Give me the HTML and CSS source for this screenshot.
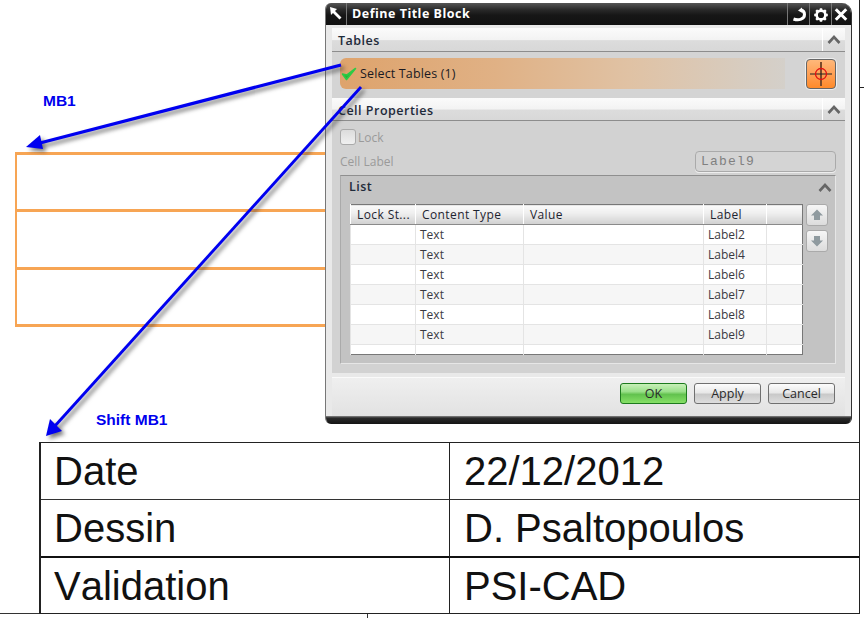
FILE: index.html
```html
<!DOCTYPE html>
<html lang="en">
<head>
<meta charset="utf-8">
<title>Define Title Block</title>
<link rel="stylesheet" href="styles.css">
</head>
<body>
<main class="canvas">
  <div class="frame-top-right"></div>
  <div class="frame-right"></div>
  <div class="frame-bottom"></div>
  <div class="frame-tick"></div>

  <div class="selected-table">
    <div class="selected-row"></div>
    <div class="selected-row"></div>
    <div class="selected-row"></div>
  </div>

  <div class="title-block">
    <div class="tb-cell">Date</div><div class="tb-cell">22/12/2012</div>
    <div class="tb-cell">Dessin</div><div class="tb-cell">D. Psaltopoulos</div>
    <div class="tb-cell">Validation</div><div class="tb-cell">PSI-CAD</div>
  </div>

  <section class="dialog">
    <header class="titlebar">
      <span class="tb-btn tb-pin">
        <svg width="20" height="20" viewBox="0 0 20 20"><path d="M4 3 L11 5 L9 7 L15.500 13.500 L13.500 15.500 L7 9 L5 11 Z" fill="#fff"/></svg>
      </span>
      <span class="dialog-title">Define Title Block</span>
      <span class="tb-btn">
        <svg width="20" height="20" viewBox="0 0 20 20"><path d="M4.500 15 C10 17 15.500 15 15.500 10.500 C15.500 8 14 6.500 12 6" fill="none" stroke="#fff" stroke-width="3"/><path d="M9 6.500 L13 3.500 L13.500 9 Z" fill="#fff"/></svg>
      </span>
      <span class="tb-btn">
        <svg width="20" height="20" viewBox="0 0 20 20"><circle cx="10" cy="11" r="4.400" fill="none" stroke="#fff" stroke-width="2.600"/><g stroke="#fff" stroke-width="2.400"><path d="M10 4.200V6.500M10 15.500V17.800M3.200 11H5.500M14.500 11H16.800M5.200 6.200L6.800 7.800M13.200 14.200L14.800 15.800M14.800 6.200L13.200 7.800M6.800 14.200L5.200 15.800"/></g></svg>
      </span>
      <span class="tb-btn tb-close">
        <svg width="20" height="20" viewBox="0 0 20 20"><path d="M4 5 L15 16 M15 5 L4 16" stroke="#fff" stroke-width="3.200"/></svg>
      </span>
    </header>

    <div class="dialog-body">
      <div class="sec-head">
        <span class="sec-title">Tables</span>
        <span class="chev-cell"><svg class="chev" width="14" height="9" viewBox="0 0 14 9"><path d="M1.500 8 L7 2 L12.500 8" fill="none" stroke="#666" stroke-width="2.600"/></svg></span>
      </div>
      <div class="tables-panel">
        <div class="select-band">
          <svg width="16" height="15" viewBox="0 0 16 15"><path d="M1.500 8 L5.500 13.500 L14.500 2.500 L6 9 Z" fill="#27b53a" stroke="#2ccb45" stroke-width="1.600" stroke-linejoin="round"/></svg>
          <span>Select Tables (1)</span>
        </div>
        <button class="target-btn" type="button" aria-label="Select">
          <svg width="26" height="26" viewBox="0 0 26 26"><path d="M13 1V25" stroke="#7a4a2a" stroke-width="2"/><path d="M2 13H24" stroke="#222" stroke-width="1"/><circle cx="13" cy="13" r="5.500" fill="none" stroke="#e01010" stroke-width="1.300"/></svg>
        </button>
      </div>

      <div class="sec-head sec-head-2">
        <span class="sec-title">Cell Properties</span>
        <span class="chev-cell"><svg class="chev" width="14" height="9" viewBox="0 0 14 9"><path d="M1.500 8 L7 2 L12.500 8" fill="none" stroke="#666" stroke-width="2.600"/></svg></span>
      </div>
      <div class="props-panel">
        <div class="lock-row"><span class="checkbox"></span><span>Lock</span></div>
        <div class="label-row"><span>Cell Label</span><span class="label-input">Label9</span></div>

        <div class="list-box">
          <div class="list-head">
            <span class="list-title">List</span>
            <svg class="chev" width="14" height="9" viewBox="0 0 14 9"><path d="M1.500 8 L7 2 L12.500 8" fill="none" stroke="#666" stroke-width="2.600"/></svg>
          </div>
          <div class="list-main">
            <table class="grid">
              <colgroup><col class="c1"><col class="c2"><col class="c3"><col class="c4"><col class="c5"></colgroup>
              <thead>
                <tr><th>Lock St...</th><th>Content Type</th><th>Value</th><th>Label</th><th></th></tr>
              </thead>
              <tbody>
                <tr><td></td><td>Text</td><td></td><td>Label2</td><td></td></tr>
                <tr><td></td><td>Text</td><td></td><td>Label4</td><td></td></tr>
                <tr><td></td><td>Text</td><td></td><td>Label6</td><td></td></tr>
                <tr><td></td><td>Text</td><td></td><td>Label7</td><td></td></tr>
                <tr><td></td><td>Text</td><td></td><td>Label8</td><td></td></tr>
                <tr><td></td><td>Text</td><td></td><td>Label9</td><td></td></tr>
                <tr class="blank"><td></td><td></td><td></td><td></td><td></td></tr>
              </tbody>
            </table>
            <div class="move-btns">
              <span class="move-btn"><svg width="14" height="14" viewBox="0 0 14 14"><path d="M7 1.500 L13 7.500 H10 V12 H4 V7.500 H1 Z" fill="#8f9a9f"/></svg></span>
              <span class="move-btn"><svg width="14" height="14" viewBox="0 0 14 14"><path d="M7 12.500 L13 6.500 H10 V2 H4 V6.500 H1 Z" fill="#8f9a9f"/></svg></span>
            </div>
          </div>
        </div>
      </div>

      <footer class="dialog-foot">
        <button class="btn btn-ok" type="button">OK</button>
        <button class="btn" type="button">Apply</button>
        <button class="btn" type="button">Cancel</button>
      </footer>
    </div>
    <div class="bottom-bar"></div>
  </section>

  <svg class="arrows" width="864" height="618" viewBox="0 0 864 618">
    <g class="arrow-set">
      <path d="M341 65 L38 143.500" stroke="#0000f0" stroke-width="3.300" fill="none"/>
      <path d="M26 147 L40 135 L43 149 Z" fill="#0000f0"/>
      <path d="M361 87 L54 427" stroke="#0000f0" stroke-width="2.900" fill="none"/>
      <path d="M46 436 L50 419 L62 431 Z" fill="#0000f0"/>
    </g>
  </svg>
  <span class="note note-mb1">MB1</span>
  <span class="note note-shift">Shift MB1</span>
</main>
</body>
</html>
```
FILE: styles.css
```css
* { box-sizing: border-box; }
html, body { margin: 0; padding: 0; background: #fff; }
.canvas {
  position: relative;
  width: 864px;
  height: 618px;
  overflow: hidden;
  background: #fff;
  font-family: "Open Sans", "DejaVu Sans", sans-serif;
}

/* drawing frame lines */
.frame-right { position: absolute; left: 859px; top: 0; width: 1px; height: 614px; background: #222; }
.frame-top-right { position: absolute; left: 859px; top: 87px; width: 5px; height: 1px; background: #222; }
.frame-bottom { position: absolute; left: 0; top: 613px; width: 860px; height: 1px; background: #333; }
.frame-tick { position: absolute; left: 367px; top: 614px; width: 1px; height: 4px; background: #333; }

/* highlighted table behind the dialog */
.selected-table {
  position: absolute;
  left: 15px;
  top: 152px;
  width: 311px;
  height: 175px;
  display: flex;
  flex-direction: column;
  border-left: 2px solid #f7a554;
}
.selected-row { flex: 1; border-top: 3px solid #f7a554; }
.selected-row:last-child { border-bottom: 3px solid #f7a554; }

/* title block */
.title-block {
  position: absolute;
  left: 39px;
  top: 442px;
  width: 821px;
  height: 172px;
  display: grid;
  grid-template-columns: 408px 1fr;
  grid-template-rows: 57px 58px 1fr;
  border: 1px solid #222;
  border-left-width: 2px;
  font-family: "Liberation Sans", Arial, sans-serif;
  font-size: 40px;
  font-kerning: none;
  color: #111;
}
.tb-cell {
  display: flex;
  align-items: center;
  padding: 1px 0 0 14px;
  border-bottom: 1px solid #333;
  white-space: nowrap;
}
.tb-cell:nth-child(odd) { padding-left: 13px; }
.tb-cell:nth-child(even) { border-left: 1px solid #222; }
.tb-cell:nth-child(n+3) { border-bottom: 2px solid #111; }
.tb-cell:nth-child(n+5) { border-bottom: 0; }

/* dialog */
.dialog {
  position: absolute;
  left: 325px;
  top: 3px;
  width: 527px;
  height: 421px;
  display: flex;
  flex-direction: column;
  border-radius: 6px 10px 6px 6px;
  overflow: hidden;
  background: #e9e9e9;
  border-left: 1px solid #777;
  border-right: 1px solid #333;
}
.titlebar {
  flex: none;
  height: 22px;
  display: flex;
  align-items: center;
  background: linear-gradient(#555 0, #2a2a2a 30%, #161616 55%, #111 100%);
  color: #fff;
}
.tb-btn {
  flex: none;
  width: 22px;
  height: 22px;
  display: flex;
  align-items: center;
  justify-content: center;
  border-left: 1px solid #777;
}
.tb-pin { border-left: 0; border-right: 1px solid #777; width: 21px; }
.tb-close { width: 20px; }
.dialog-title {
  flex: 1;
  padding-left: 5px;
  font-size: 12.500px;
  font-weight: 700;
  letter-spacing: 0.500px;
  line-height: 22px;
}
.dialog-body { flex: 1; display: flex; flex-direction: column; padding: 3px 6px 0 6px; min-height: 0; }
.sec-head {
  flex: none;
  height: 24px;
  display: flex;
  align-items: center;
  justify-content: space-between;
  background: linear-gradient(#fbfbfb 0, #f3f3f3 50%, #dcdcdc 55%, #d8d8d8 100%);
  border-bottom: 1px solid #8d8d8d;
  color: #1e2a3a;
}
.sec-head-2 { height: 23px; }
.sec-title { padding: 2px 0 0 6px; font-size: 12.500px; font-weight: 600; letter-spacing: 0.500px; }
.chev-cell {
  width: 23px;
  height: 100%;
  display: flex;
  align-items: center;
  justify-content: center;
  border-left: 1px solid #fff;
}
.tables-panel {
  flex: none;
  height: 46px;
  display: flex;
  align-items: flex-start;
  justify-content: space-between;
  gap: 21px;
  padding: 6px 9px 0 8px;
  background: #d4d4d4;
}
.select-band {
  flex: 1;
  height: 31px;
  display: flex;
  align-items: center;
  gap: 3px;
  padding-left: 1px;
  border-radius: 6px 0 0 6px;
  background: linear-gradient(90deg, #dea36c 0, #e0b185 35%, #e0c2a4 65%, #d4d0ca 100%);
  font-size: 12.500px;
  letter-spacing: 0.150px;
  color: #1a1a22;
  white-space: nowrap;
}
.target-btn {
  flex: none;
  width: 30px;
  height: 30px;
  padding: 1px;
  margin-top: 1px;
  display: flex;
  border: 1px solid #666;
  border-radius: 4px;
  background: linear-gradient(#ffb87a 0, #ffa055 50%, #ff8a2a 100%);
  box-shadow: 0 0 0 1px #eee;
}
.props-panel {
  flex: none;
  height: 252px;
  padding: 8px 9px 0 8px;
  background: #d2d2d2;
  color: #9a9a9a;
  font-size: 12px;
}
.lock-row { height: 16px; display: flex; align-items: center; gap: 2px; }
.checkbox {
  width: 16px;
  height: 16px;
  border: 1px solid #aaa;
  border-radius: 3px;
  background: linear-gradient(#dcdcdc, #f0f0f0);
}
.label-row {
  height: 21px;
  margin-top: 6px;
  display: flex;
  align-items: center;
  justify-content: space-between;
}
.label-input {
  width: 141px;
  height: 21px;
  padding-left: 5px;
  line-height: 19px;
  border: 1px solid #aaa;
  border-radius: 4px;
  background: #d4d4d4;
  box-shadow: 0 1px 0 #eee;
  font-family: "Liberation Mono", monospace;
  font-size: 13px;
  letter-spacing: 1.200px;
  color: #808080;
}
.list-box {
  height: 189px;
  margin-top: 3px;
  background: #c3c3c3;
  border-top: 1px solid #8f8f8f;
  border-left: 1px solid #aaa;
  border-right: 1px solid #e6e6e6;
  border-bottom: 1px solid #e6e6e6;
}
.list-head {
  height: 28px;
  display: flex;
  align-items: flex-start;
  justify-content: space-between;
  padding: 2px 3px 0 8px;
}
.list-head .chev { margin-top: 5px; }
.list-title { font-size: 12.500px; font-weight: 600; letter-spacing: 0.500px; color: #1e2a3a; }
.list-main { display: flex; align-items: flex-start; gap: 3px; padding-left: 9px; }
.grid {
  width: 453px;
  table-layout: fixed;
  border-collapse: collapse;
  border: 1px solid #777;
  background: #fff;
  font-size: 12px;
  color: #3a3a42;
}
.c1 { width: 65px; }
.c2 { width: 108px; }
.c3 { width: 180px; }
.c4 { width: 63px; }
.c5 { width: 36px; }
.grid th {
  height: 20px;
  padding: 0 0 0 6px;
  text-align: left;
  font-weight: 400;
  letter-spacing: 0.400px;
  color: #1e2430;
  background: linear-gradient(#fafafa 0, #efefef 40%, #d0d0d0 100%);
  border-bottom: 1px solid #8a8a8a;
  border-left: 1px solid #fff;
  white-space: nowrap;
  overflow: hidden;
}
.grid td {
  height: 20px;
  padding: 0 0 0 4px;
  border-bottom: 1px solid #e4e4e4;
  border-left: 1px solid #e4e4e4;
  white-space: nowrap;
}
.grid tbody tr:nth-child(even) { background: #f6f6f6; }
.grid .blank td { height: 10px; border-bottom: 0; }
.move-btns { display: flex; flex-direction: column; gap: 4px; }
.move-btn {
  width: 22px;
  height: 22px;
  display: flex;
  align-items: center;
  justify-content: center;
  border: 1px solid #aaa;
  border-radius: 3px;
  background: linear-gradient(#f6f6f6, #dcdcdc);
}
.dialog-foot {
  flex: 1;
  display: flex;
  justify-content: flex-end;
  gap: 7px;
  margin-top: 4px;
  padding: 5px 10px 0 0;
  border-top: 1px solid #fafafa;
  background: linear-gradient(#efefef, #e2e2e2);
}
.btn {
  width: 67px;
  height: 21px;
  padding: 0;
  font: 12.500px "Open Sans", "DejaVu Sans", sans-serif;
  color: #2a2a2a;
  border: 1px solid #707070;
  border-radius: 3px;
  background: linear-gradient(#fdfdfd 0, #e8e8e8 45%, #c9c9c9 55%, #dedede 100%);
}
.btn-ok {
  border-color: #1d7a1d;
  background: linear-gradient(#c8f0b8 0, #9ae08a 40%, #62c24e 55%, #86e066 100%);
}
.bottom-bar { flex: none; height: 8px; background: linear-gradient(#888 0, #2a2a2a 25%, #141414 100%); }

/* annotations */
.arrows { position: absolute; left: 0; top: 0; pointer-events: none; }
.arrow-set { filter: drop-shadow(3px 3px 2px rgba(60, 60, 60, 0.7)); }
.note {
  position: absolute;
  font-family: "Liberation Sans", Arial, sans-serif;
  font-size: 15.500px;
  font-weight: 700;
  color: #0000ee;
  line-height: 18px;
  white-space: nowrap;
}
.note-mb1 { left: 43px; top: 92px; }
.note-shift { left: 96px; top: 411px; }
```
